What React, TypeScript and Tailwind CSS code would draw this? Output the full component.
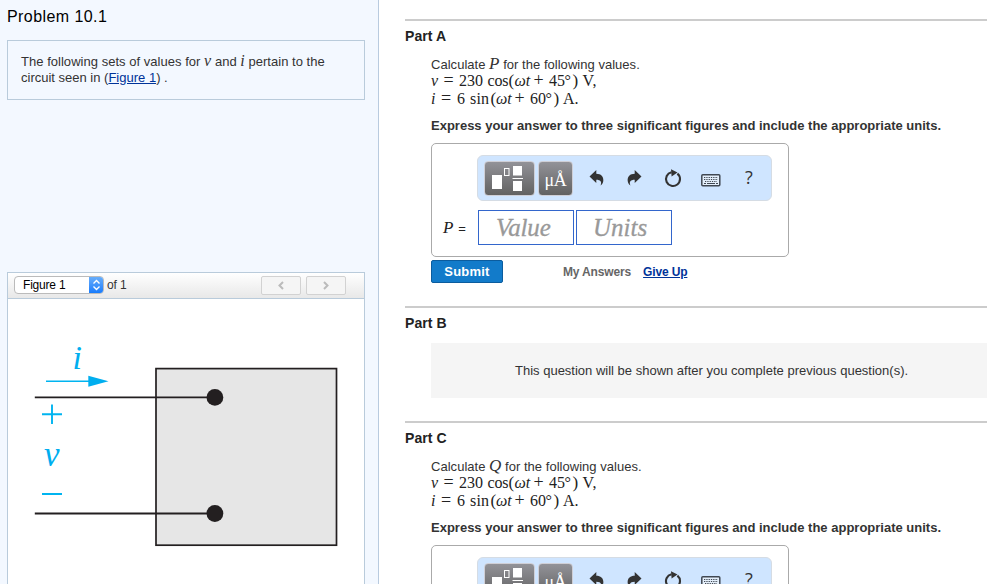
import React from "react";

type Token = { text: string; width: string; italic?: boolean; size?: string };

const voltage: Token[] = [
  { text: "v", width: "w-[12.5px]", italic: true },
  { text: "=", width: "w-[15.5px]", size: "text-[18px]" },
  { text: "230", width: "w-[28.5px]" },
  { text: "cos", width: "w-[21px]", size: "text-[16px] tracking-[-0.2px]" },
  { text: "(", width: "w-[6px]", size: "text-[17px]" },
  { text: "ωt", width: "w-[19px]", italic: true },
  { text: "+", width: "w-[15.5px]", size: "text-[18px]" },
  { text: "45", width: "w-[15.5px]" },
  { text: "°", width: "w-[8px]" },
  { text: ")", width: "w-[10px]", size: "text-[17px]" },
  { text: "V,", width: "w-[20px]", size: "text-[16px] tracking-[0.6px]" },
];

const current: Token[] = [
  { text: "i", width: "w-[10px]", italic: true },
  { text: "=", width: "w-[16px]", size: "text-[18px]" },
  { text: "6", width: "w-[13px]" },
  { text: "sin", width: "w-[20.5px]", size: "text-[16px] tracking-[0.2px]" },
  { text: "(", width: "w-[5.5px]", size: "text-[17px]" },
  { text: "ωt", width: "w-[18.5px]", italic: true },
  { text: "+", width: "w-[15.5px]", size: "text-[18px]" },
  { text: "60", width: "w-[15.5px]" },
  { text: "°", width: "w-[8px]" },
  { text: ")", width: "w-[9.5px]", size: "text-[17px]" },
  { text: "A.", width: "w-[20px]" },
];

const serif = "font-['Liberation_Serif',serif]";

function Formula({ tokens }: { tokens: Token[] }) {
  return (
    <div className={`flex h-[18px] items-baseline whitespace-nowrap text-[16px] leading-[18px] text-[#222] ${serif}`}>
      {tokens.map((t, n) => (
        <span key={n} className={`${t.width} shrink-0 ${t.size ?? ""} leading-[18px] ${t.italic ? "italic" : ""}`}>
          {t.text}
        </span>
      ))}
    </div>
  );
}

function Toolbar() {
  return (
    <div className="ml-[45px] flex h-[46px] w-[295px] items-start rounded-[6px] border border-[#d5dce4] bg-[#cfe5ff] pl-[6px] pt-[5px]">
      <div className="h-[35px] w-[51px] shrink-0 rounded-[4px] border border-[#cfcfd6] bg-gradient-to-b from-[#929298] to-[#626262]">
        <svg width="49" height="33" viewBox="0 0 49 33">
          <rect x="7" y="13" width="10" height="14" fill="#fff" />
          <rect x="19.5" y="6.500" width="4.500" height="7" fill="none" stroke="#fff" />
          <rect x="28" y="4" width="9" height="9.500" fill="#fff" />
          <rect x="27.500" y="16" width="10.500" height="1" fill="#fff" />
          <rect x="28" y="19" width="9" height="10" fill="#fff" />
        </svg>
      </div>
      <div className={`ml-[3px] h-[35px] w-[35px] shrink-0 rounded-[4px] border border-[#cfcfd6] bg-gradient-to-b from-[#929298] to-[#626262] pt-[6px] text-center text-[18px] leading-[24px] tracking-[-0.3px] text-white ${serif}`}>
        μÅ
      </div>
      <svg width="160" height="34" viewBox="573 161 160 34" className="shrink-0">
        <path d="M589.5 176.5L596.3 170V173.7C601 173.7 603.8 176.5 603.3 181C603 183 602 184.700 600.500 185.500C602.200 181.500 600.400 179.800 596.300 179.700V183Z" fill="#333" />
        <path d="M641.500 176.500L634.700 170V173.700C630 173.700 627.200 176.500 627.700 181C628 183 629 184.700 630.500 185.500C628.800 181.500 630.600 179.800 634.700 179.700V183Z" fill="#333" />
        <path d="M677.4 173.600A7 7 0 1 1 671.500 172.200" fill="none" stroke="#333" strokeWidth="2.1" />
        <path d="M671 169.300L677.500 172.400L671.600 176.500Z" fill="#333" />
        <rect x="701.8" y="174.800" width="18" height="11" rx="1" fill="#e4effb" stroke="#414852" strokeWidth="1.500" />
        <path d="M704 177.500H718M704 179.500H718M705 181.500H717" stroke="#414852" strokeWidth="1" strokeDasharray="1.300 1" />
        <path d="M704 183.500H706M707 183.500H715M716 183.500H718" stroke="#414852" strokeWidth="1" />
      </svg>
      <span className="ml-[12px] mt-[5px] font-['Open_Sans',sans-serif] text-[18px] leading-[22px] text-[#333]">?</span>
    </div>
  );
}

function AnswerBox({ symbol }: { symbol: string }) {
  return (
    <div className="mt-[9px] h-[114px] w-[358px] rounded-[5px] border border-[#aaa] bg-white pt-[11px]">
      <Toolbar />
      <div className="mt-[9px] flex h-[35px] items-center">
        <span className={`w-[46px] whitespace-nowrap pl-[11px] text-[17px] italic text-[#222] ${serif}`}>
          {symbol} <span className="ml-px font-['Liberation_Sans',sans-serif] text-[13px] not-italic">=</span>
        </span>
        <div className={`h-[35px] w-[96px] border border-[#3366cc] pl-[17px] text-[25px] italic leading-[33px] tracking-[-0.2px] text-[#999] [-webkit-text-stroke:0.3px_#999] ${serif}`}>
          Value
        </div>
        <div className={`ml-[2px] h-[35px] w-[96px] border border-[#3366cc] pl-[16px] text-[25px] italic leading-[33px] text-[#999] [-webkit-text-stroke:0.3px_#999] ${serif}`}>
          Units
        </div>
      </div>
    </div>
  );
}

function Question({ title, symbol }: { title: string; symbol: string }) {
  return (
    <section className="h-[287px] shrink-0 border-t-2 border-[#ccc]">
      <h2 className="h-[36px] pt-[6px] text-[14px] font-bold leading-[18px] tracking-[0.1px] text-[#222]">{title}</h2>
      <div className="pl-[26px]">
        <p className="h-[14px] whitespace-nowrap text-[13px] leading-[16px] tracking-[0.03px]">
          Calculate <span className={`text-[17px] italic leading-[1px] ${serif}`}>{symbol}</span> for the following values.
        </p>
        <Formula tokens={voltage} />
        <Formula tokens={current} />
        <p className="mt-[11px] h-[16px] whitespace-nowrap text-[13px] font-bold leading-[16px]">
          Express your answer to three significant figures and include the appropriate units.
        </p>
        <AnswerBox symbol={symbol} />
        <div className="mt-[3px] flex h-[23px] items-center text-[12px] font-bold">
          <button className="h-[23px] w-[72px] rounded-[2px] border border-[#0b5c9e] bg-[#127bca] text-[13px] leading-[20px] tracking-[0.2px] text-white">
            Submit
          </button>
          <span className="ml-[60px] tracking-[-0.15px] text-[#666]">My Answers</span>
          <a className="ml-[12px] tracking-[-0.15px] text-[#003399] underline">Give Up</a>
        </div>
      </div>
    </section>
  );
}

function Circuit() {
  return (
    <svg width="356" height="285" viewBox="8 299 356 285" className="block">
      <rect x="156" y="368.600" width="180.500" height="176.600" fill="#e6e6e6" stroke="#231f20" strokeWidth="1.700" />
      <path d="M34.800 397.400H214M34.800 513.500H214" stroke="#231f20" strokeWidth="1.800" />
      <circle cx="214.900" cy="397.400" r="8.400" fill="#231f20" />
      <circle cx="214.900" cy="513.500" r="8.400" fill="#231f20" />
      <g stroke="#00b4f0" strokeWidth="1.900">
        <path d="M46 381.200H90" strokeWidth="1.500" />
        <path d="M42 414.300H62M52 404.500V424M42 494H62" />
      </g>
      <path d="M88.300 375.800L108.500 381.200L88.300 386.700Z" fill="#00aeef" />
      <text x="72.500" y="368.500" fontSize="34" fontStyle="italic" fontFamily="Liberation Serif, serif" fill="#00aeef">i</text>
      <text x="44" y="466" fontSize="35" fontStyle="italic" fontFamily="Liberation Serif, serif" fill="#00aeef">v</text>
    </svg>
  );
}

function NavButton({ d }: { d: string }) {
  return (
    <button className="flex h-[19px] w-[40px] items-center justify-center rounded-[2px] border border-[#d2d2d2] bg-[#f5f5f5]">
      <svg width="8" height="9" viewBox="0 0 8 9">
        <path d={d} fill="none" stroke="#bbb" strokeWidth="2" />
      </svg>
    </button>
  );
}

export default function App() {
  return (
    <div className="flex h-[584px] w-[987px] overflow-hidden bg-white font-['Liberation_Sans',sans-serif] text-[#333]">
      <aside className="h-full w-[379px] shrink-0 border-r border-[#b9cbdf] bg-[#f3f8ff] pl-[7px]">
        <h1 className="h-[40px] pt-[6px] text-[16px] leading-[21px] tracking-[0.42px] text-black">Problem 10.1</h1>
        <div className="h-[60px] w-[358px] border border-[#b9cbdb] pl-[13px] pt-[13px] text-[13px] leading-[16px]">
          <p className="h-[16px] whitespace-nowrap tracking-[0.03px]">
            The following sets of values for <span className={`text-[16px] italic leading-[1px] ${serif}`}>v</span> and{" "}
            <span className={`text-[16px] italic leading-[1px] ${serif}`}>i</span> pertain to the
          </p>
          <p>
            circuit seen in (<a className="text-[#003399] underline">Figure 1</a>) .
          </p>
        </div>
        <div className="mt-[172px] h-[314px] w-[358px] border border-[#b9cbdb] bg-white">
          <div className="flex h-[26px] items-center border-b border-[#b9cbdb] bg-gradient-to-b from-white to-[#e8e8e8] pl-[6px] text-[12px]">
            <div className="-mt-px flex h-[18px] w-[90px] items-center overflow-hidden rounded-[4px] border border-[#bbb] bg-white text-[12px] text-black">
              <span className="w-[74px] shrink-0 pl-[8px] tracking-[-0.2px]">Figure 1</span>
              <span className="flex h-[18px] w-[15px] items-center justify-center bg-gradient-to-b from-[#6bb0fa] to-[#0a78fc]">
                <svg width="9" height="12" viewBox="0 0 9 12">
                  <path d="M1.500 4.500L4.500 1.500L7.500 4.500M1.500 7.500L4.500 10.500L7.500 7.500" fill="none" stroke="#fff" strokeWidth="1.400" />
                </svg>
              </span>
            </div>
            <span className="-mt-px ml-[3px] w-[154px] tracking-[-0.1px]">of 1</span>
            <div className="flex gap-[5px]">
              <NavButton d="M6 1L2.500 4.500L6 8" />
              <NavButton d="M2 1L5.500 4.500L2 8" />
            </div>
          </div>
          <Circuit />
        </div>
      </aside>
      <main className="flex h-full min-w-0 flex-1 flex-col pl-[26px] pt-[19px]">
        <Question title="Part A" symbol="P" />
        <section className="h-[115px] shrink-0 border-t-2 border-[#ccc]">
          <h2 className="h-[35px] pt-[6px] text-[14px] font-bold leading-[18px] tracking-[0.1px] text-[#222]">Part B</h2>
          <div className="ml-[26px] flex h-[55px] items-center bg-[#f5f5f5] pl-[84px] text-[13px]">
            This question will be shown after you complete previous question(s).
          </div>
        </section>
        <Question title="Part C" symbol="Q" />
      </main>
    </div>
  );
}
